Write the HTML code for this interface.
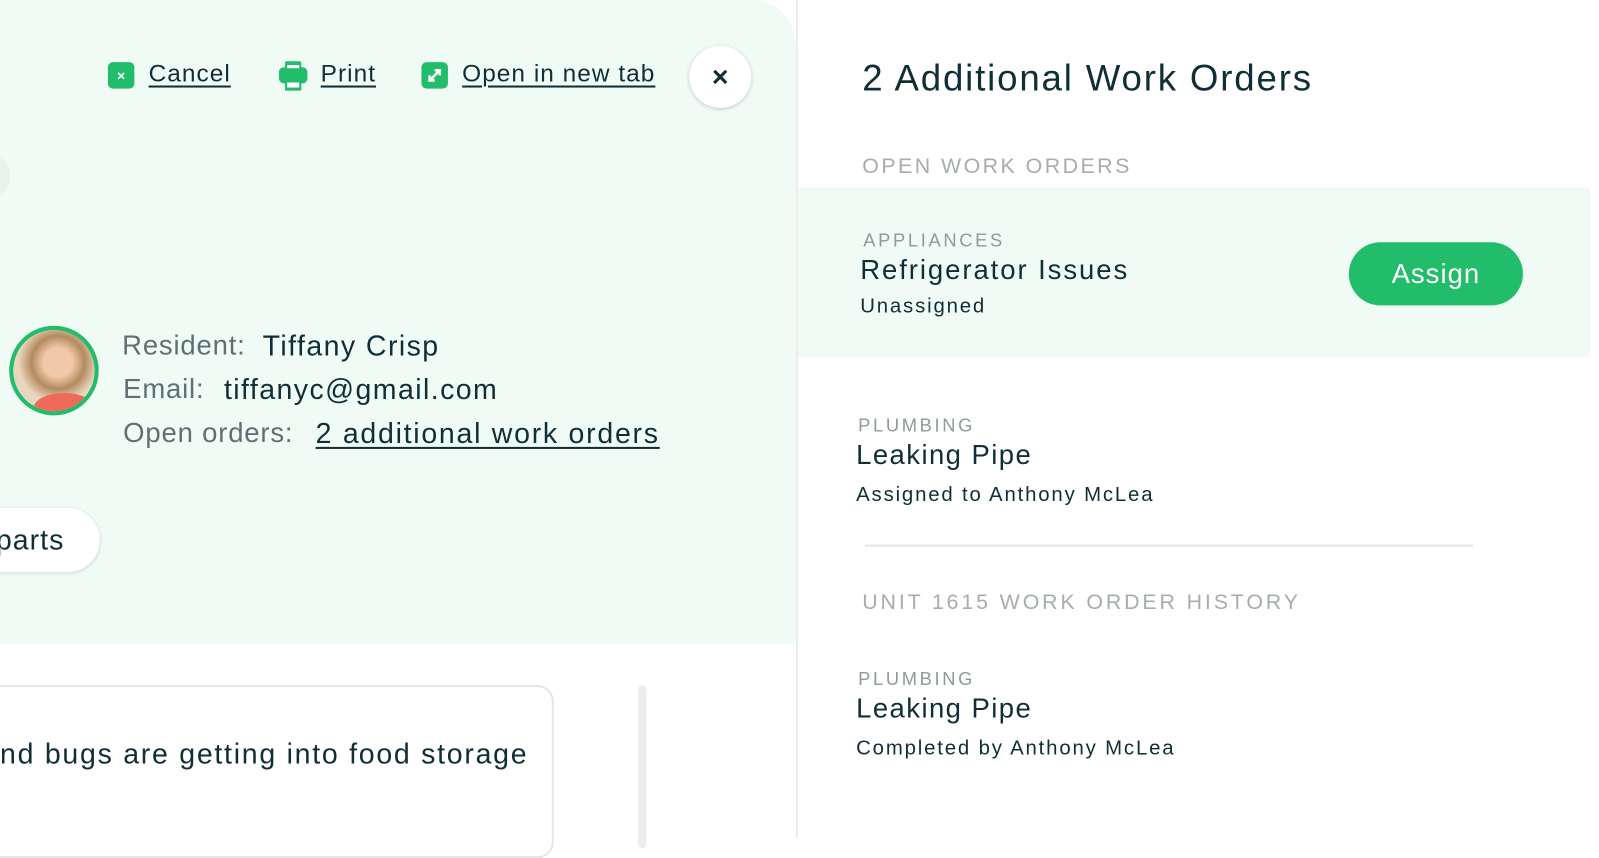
<!DOCTYPE html>
<html><head><style>
*{margin:0;padding:0;box-sizing:border-box}
body{width:1599px;height:823px;overflow:hidden;background:#fff;font-family:"Liberation Sans",sans-serif;color:#0f2e35;position:relative}
#w{position:absolute;left:0;top:0;width:1571px;height:810px;transform:scale(1.018);transform-origin:0 0}
.abs{position:absolute;white-space:nowrap}
.left{position:absolute;left:0;top:0;width:782px;height:633px;background:#f1fbf6;border-top-right-radius:44px}
.divider{position:absolute;left:782px;top:0;width:2px;height:823px;background:#ececec}
.link{text-decoration:underline;text-underline-offset:4px;text-decoration-thickness:1.5px;font-size:24px;letter-spacing:1px}
.ico{position:absolute;width:26px;height:26px;border-radius:5px;background:#21bd6a;color:#fff;font-size:14px;font-weight:bold;text-align:center;line-height:26px}
.cap{font-size:21px;letter-spacing:2.8px;color:#a7adad}
.cat{font-size:18px;letter-spacing:2.6px;color:#8e9a9b}
.t{font-size:27px;letter-spacing:1.4px}
.s{font-size:20px;letter-spacing:1.8px}
.lbl{font-size:27px;color:#5f7074;letter-spacing:.8px}
.val{font-size:28px;letter-spacing:1.4px}
</style></head><body><div id="w">
<div class="left"></div>
<div class="abs" style="left:-20px;top:153px;width:30px;height:40px;border-radius:50%;background:#e5f4ec"></div>
<div class="ico" style="left:106px;top:61px">×</div>
<div class="abs link" style="left:146px;top:59px">Cancel</div>
<svg class="abs" style="left:274px;top:60px" width="28" height="30" viewBox="0 0 28 30"><rect x="6" y="0" width="16" height="8" rx="2" fill="#21bd6a"/><rect x="0" y="6" width="28" height="16" rx="5" fill="#21bd6a"/><rect x="6" y="19" width="16" height="10" rx="1" fill="#21bd6a"/><rect x="8" y="21" width="12" height="5" fill="#fff"/><rect x="8" y="4" width="12" height="3" fill="#fff"/></svg>
<div class="abs link" style="left:315px;top:59px">Print</div>
<div class="ico" style="left:414px;top:61px"><svg width="26" height="26" viewBox="0 0 26 26"><path d="M8 18L18 8M13 8h5v5M8 13v5h5" stroke="#fff" stroke-width="2.5" fill="none"/></svg></div>
<div class="abs link" style="left:454px;top:59px">Open in new tab</div>
<div class="abs" style="left:677px;top:45px;width:61px;height:61px;border-radius:50%;background:#fff;box-shadow:0 1px 4px rgba(0,0,0,.2);text-align:center;line-height:61px;font-size:28px;font-weight:bold">×</div>

<div class="abs" style="left:9px;top:320px;width:88px;height:88px;border-radius:50%;border:4px solid #21bd6a;background:radial-gradient(circle at 55% 40%,#f0c9a8 0 22%,#b48a5f 40%,#e9d6be 60%);overflow:hidden"><div style="position:absolute;left:20px;top:62px;width:60px;height:30px;background:#ef6a5a;border-radius:50%"></div></div>
<div class="abs lbl" style="left:120px;top:324px">Resident:</div>
<div class="abs val" style="left:258px;top:324px">Tiffany Crisp</div>
<div class="abs lbl" style="left:121px;top:367px">Email:</div>
<div class="abs val" style="left:220px;top:367px">tiffanyc@gmail.com</div>
<div class="abs lbl" style="left:121px;top:410px">Open orders:</div>
<div class="abs link val" style="left:310px;top:410px;letter-spacing:1.7px">2 additional work orders</div>
<div class="abs" style="left:-40px;top:499px;width:138px;height:63px;border-radius:32px;background:#fff;box-shadow:0 1px 4px rgba(0,0,0,.15);font-size:28px;letter-spacing:1px;line-height:63px;padding-left:36px">parts</div>

<div class="abs" style="left:-20px;top:673px;width:564px;height:170px;border:2px solid #e6e6e6;border-radius:16px;background:#fff"></div>
<div class="abs" style="left:0;top:725px;font-size:28px;letter-spacing:1.7px">nd bugs are getting into food storage</div>
<div class="abs" style="left:627px;top:673px;width:8px;height:160px;border-radius:4px;background:#ececec"></div>

<div class="divider"></div>
<div class="abs" style="left:847px;top:56px;font-size:36px;letter-spacing:1.8px">2 Additional Work Orders</div>
<div class="abs cap" style="left:847px;top:152px;letter-spacing:2.4px">OPEN WORK ORDERS</div>
<div class="abs" style="left:784px;top:184px;width:778px;height:167px;background:#f1fbf6"></div>
<div class="abs cat" style="left:848px;top:226px">APPLIANCES</div>
<div class="abs t" style="left:845px;top:250px;letter-spacing:1.9px">Refrigerator Issues</div>
<div class="abs s" style="left:845px;top:290px">Unassigned</div>
<div class="abs" style="left:1325px;top:238px;width:171px;height:62px;border-radius:31px;background:#21bd6a;color:#fff;font-size:27px;letter-spacing:1px;text-align:center;line-height:62px">Assign</div>
<div class="abs cat" style="left:843px;top:408px">PLUMBING</div>
<div class="abs t" style="left:841px;top:432px">Leaking Pipe</div>
<div class="abs s" style="left:841px;top:475px">Assigned to Anthony McLea</div>
<div class="abs" style="left:850px;top:535px;width:597px;height:2px;background:#e3e3e3"></div>
<div class="abs cap" style="left:847px;top:580px">UNIT 1615 WORK ORDER HISTORY</div>
<div class="abs cat" style="left:843px;top:657px">PLUMBING</div>
<div class="abs t" style="left:841px;top:681px">Leaking Pipe</div>
<div class="abs s" style="left:841px;top:724px">Completed by Anthony McLea</div>
</div></body></html>
